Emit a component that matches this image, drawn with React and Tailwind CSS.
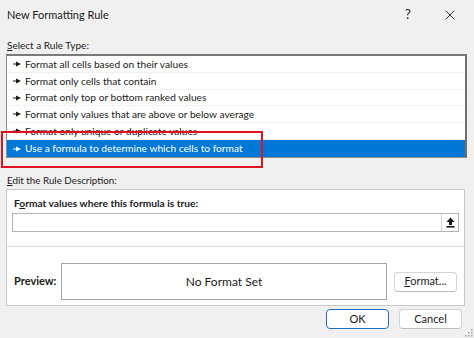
import { X } from 'lucide-react';

const RULES = [
  'Format all cells based on their values',
  'Format only cells that contain',
  'Format only top or bottom ranked values',
  'Format only values that are above or below average',
  'Format only unique or duplicate values',
  'Use a formula to determine which cells to format',
];

function Pointer({ color }) {
  return (
    <svg width="8" height="6" viewBox="0 0 8 6" className="shrink-0">
      <rect x="0" y="2.5" width="4" height="1" fill={color} />
      <path d="M3 0.5 L8 3 L3 5.5 Z" fill={color} />
    </svg>
  );
}

function Button({ children, primary }) {
  return (
    <button
      className={`h-[20px] w-[63px] rounded-[4px] bg-white text-[11px] text-[#1a1a1a] flex items-center justify-center ${
        primary ? 'border border-[#1e6fc2]' : 'border border-[#d4d4d4] border-b-[#bdbdbd]'
      }`}
    >
      {children}
    </button>
  );
}

export default function App() {
  return (
    <div
      className="relative w-[474px] h-[338px] bg-[#f0f0f0] text-[#1a1a1a] overflow-hidden"
      style={{ fontFamily: 'Lato, "Noto Sans", sans-serif' }}
    >
      {/* Title bar */}
      <div className="h-[30px] flex items-center pl-[7px]">
        <span className="text-[11px]">New Formatting Rule</span>
        <span className="ml-auto text-[13px] w-[12px] mr-[25px]">?</span>
        <X size={16} strokeWidth={1.3} className="mr-[16px]" />
      </div>

      {/* Rule type */}
      <div className="mt-[8px] h-[14px] pl-[7px] flex items-center text-[10px] leading-none">
        <span>
          <span className="underline">S</span>elect a Rule Type:
        </span>
      </div>
      <div className="ml-[6px] mr-[7px] mt-[2px] h-[104px] bg-white border border-[#8c8c8c] border-t-2 border-t-[#7a7a7a] border-r-2 border-r-[#6f6f6f] flex flex-col">
        {RULES.map((r, i) => {
          const sel = i === RULES.length - 1;
          return (
            <div
              key={r}
              className={`h-[17px] flex items-center gap-[3px] pl-[6px] text-[10.2px] leading-none ${
                sel ? 'bg-[#0078d7] text-white' : 'border-b border-[#f2f2f2]'
              }`}
            >
              <Pointer color={sel ? '#ffffff' : '#1a1a1a'} />
              <span className="ml-[1px]">{r}</span>
            </div>
          );
        })}
      </div>

      {/* Red highlight annotation */}
      <div className="absolute left-[1px] top-[131px] w-[262px] h-[37px] border-2 border-[#e0121f]" />

      {/* Rule description */}
      <div className="mt-[16px] h-[14px] pl-[7px] flex items-center text-[9.8px] leading-none">
        <span>
          <span className="underline">E</span>dit the Rule Description:
        </span>
      </div>
      <div className="ml-[6px] w-[459px] mt-[1px] h-[117px] bg-white border border-[#c8c8c8] flex flex-col">
        <div className="h-[23px] pl-[7px] pt-[3px] flex items-center text-[10.2px] font-bold leading-none">
          <span>
            F<span className="underline">o</span>rmat values where this formula is true:
          </span>
        </div>
        <div className="mx-[5px] h-[19px] shrink-0 border border-[#b4b4b4] flex justify-end">
          <div className="w-[17px] h-full border-l border-[#d6d6d6] flex items-center justify-center">
            <svg width="9" height="11" viewBox="0 0 9 11">
              <path d="M4.5 0.5 L8.5 5 L6 5 L6 8 L3 8 L3 5 L0.5 5 Z" fill="#1a1a1a" />
              <rect x="0.5" y="9" width="8" height="1.6" fill="#1a1a1a" />
            </svg>
          </div>
        </div>
        <div className="mt-[14px] border-t border-[#d9d9d9]" />
        <div className="mt-[16px] flex items-center pl-[7px] pr-[7px]">
          <span className="w-[47px] text-[11px] font-bold">Preview:</span>
          <div className="w-[326px] h-[37px] border border-[#a6a6a6] flex items-center justify-center text-[12px]">
            No Format Set
          </div>
          <div className="ml-auto">
            <Button>
              <span>
                <span className="underline">F</span>ormat...
              </span>
            </Button>
          </div>
        </div>
      </div>

      {/* Footer buttons */}
      <div className="mt-[3px] flex justify-end gap-[10px] pr-[12px]">
        <Button primary>OK</Button>
        <Button>Cancel</Button>
      </div>

      {/* Resize grip */}
      <svg className="absolute right-[1px] bottom-[1px]" width="9" height="9" viewBox="0 0 9 9">
        {[
          [7, 1],
          [4, 4],
          [7, 4],
          [1, 7],
          [4, 7],
          [7, 7],
        ].map(([x, y]) => (
          <rect key={`${x}-${y}`} x={x} y={y} width="1.5" height="1.5" fill="#a0a0a0" />
        ))}
      </svg>
    </div>
  );
}
